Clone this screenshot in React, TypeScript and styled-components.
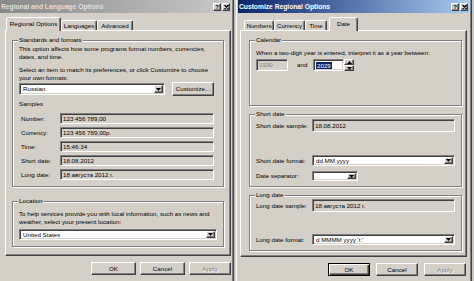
import React from 'react';
import styled, { createGlobalStyle, css } from 'styled-components';

/// Classic palette
const FACE = '#d4d0c8';
const LIGHT = '#ffffff';
const SHADOW = '#808080';
const DARK = '#404040';

const raised = css`
  border: 1px solid;
  border-color: ${ LIGHT } ${ DARK } ${ DARK } ${ LIGHT };
  box-shadow: inset -1px -1px ${ SHADOW };
`;

const sunken = css`
  border: 1px solid;
  border-color: ${ SHADOW } ${ LIGHT } ${ LIGHT } ${ SHADOW };
  box-shadow: inset 1px 1px ${ DARK }, inset -1px -1px ${ FACE };
`;

const GlobalStyle = createGlobalStyle`
  html, body {
    margin: 0;
    padding: 0;
    overflow: hidden;
    background: #cac8c3;
  }

  body {
    font-family: "Liberation Sans", Arial, sans-serif;
    font-size: 6.2px;
    line-height: 8px;
    color: #000;
  }

  * {
    box-sizing: border-box;
  }
`;

/// Window frame
const Desktop = styled.div`
  display: flex;
  align-items: flex-start;
  width: 474px;
  height: 281px;
  overflow: hidden;
`;

const Window = styled.div<{ $width: number; $offset: number }>`
  flex: none;
  display: flex;
  flex-direction: column;
  width: ${ p => p.$width }px;
  height: 292px;
  margin: -3px 0 0 ${ p => p.$offset }px;
  padding: 2px;
  background: ${ FACE };
  border: 1px solid;
  border-color: ${ FACE } ${ DARK } ${ DARK } ${ FACE };
  box-shadow: inset 1px 1px ${ LIGHT }, inset -1px -1px ${ SHADOW };
`;

const TitleBar = styled.div<{ $active?: boolean }>`
  display: flex;
  align-items: center;
  height: 13px;
  padding: 0 1px 0 1px;
  background: ${ p => p.$active
          ? 'linear-gradient(to right, #0a246a, #a6caf0)'
          : 'linear-gradient(to right, #8a8a8a, #c8c8c8)' };
  color: ${ p => p.$active ? '#ffffff' : '#e2dfda' };
`;

const TitleText = styled.span`
  flex: 1;
  font-weight: bold;
  font-size: 6.7px;
  white-space: nowrap;
  overflow: hidden;
`;

const CaptionButton = styled.div`
  ${ raised };
  width: 8px;
  height: 8px;
  margin-left: 1px;
  display: flex;
  align-items: center;
  justify-content: center;
  background: ${ FACE };
  color: #000;
  font-weight: bold;
  font-size: 6px;
  line-height: 1;
`;

const WindowBody = styled.div<{ $pad: string }>`
  display: flex;
  flex-direction: column;
  padding: ${ p => p.$pad };
`;

/// Tabs
const TabStrip = styled.div<{ $indent: number }>`
  position: relative;
  z-index: 1;
  display: flex;
  align-items: flex-end;
  height: 13px;
  padding-left: ${ p => p.$indent }px;
`;

const Tab = styled.div<{ $width: number; $selected?: boolean; $gap?: number }>`
  width: ${ p => p.$width }px;
  height: ${ p => p.$selected ? 14 : 10 }px;
  margin-bottom: ${ p => p.$selected ? -1 : 0 }px;
  margin-left: ${ p => p.$gap || 0 }px;
  padding-top: ${ p => p.$selected ? 2 : 1 }px;
  border: 1px solid;
  border-bottom: none;
  border-color: ${ LIGHT } ${ DARK } transparent ${ LIGHT };
  border-radius: 2px 2px 0 0;
  box-shadow: inset -1px 0 ${ SHADOW };
  background: ${ FACE };
  text-align: center;
  white-space: nowrap;
`;

const Panel = styled.div<{ $height: number; $pad: string }>`
  display: flex;
  flex-direction: column;
  height: ${ p => p.$height }px;
  padding: ${ p => p.$pad };
  border: 1px solid;
  border-color: ${ LIGHT } ${ DARK } ${ DARK } ${ LIGHT };
  box-shadow: inset -1px -1px ${ SHADOW };
`;

/// Group boxes
const Group = styled.div<{ $height: number; $pad: string; $mt?: number }>`
  position: relative;
  flex: none;
  height: ${ p => p.$height }px;
  margin-top: ${ p => p.$mt || 0 }px;
  padding: ${ p => p.$pad };
  border: 1px solid ${ SHADOW };
  box-shadow: 1px 1px ${ LIGHT }, inset 1px 1px ${ LIGHT };
`;

const GroupLabel = styled.span`
  position: absolute;
  top: -5px;
  left: 5px;
  padding: 0 1px;
  background: ${ FACE };
  white-space: nowrap;
`;

const Text = styled.div<{ $mt?: number }>`
  margin-top: ${ p => p.$mt || 0 }px;
  white-space: nowrap;
`;

/// Inputs
const Combo = styled.div<{ $width: number; $height: number; $mt?: number }>`
  ${ sunken };
  display: flex;
  align-items: stretch;
  width: ${ p => p.$width }px;
  height: ${ p => p.$height }px;
  margin-top: ${ p => p.$mt || 0 }px;
  padding: 1px;
  background: #fff;
`;

const ComboValue = styled.span`
  flex: 1;
  display: flex;
  align-items: center;
  padding-left: 2px;
  white-space: nowrap;
  overflow: hidden;
`;

const DropButton = styled.div`
  ${ raised };
  flex: none;
  width: 9px;
  display: flex;
  align-items: center;
  justify-content: center;
  background: ${ FACE };
`;

const Arrow = ({ up }: { up?: boolean }) => (
  <svg width="5" height="3" viewBox="0 0 5 3">
    <polygon points={ up ? '0,3 5,3 2.5,0' : '0,0 5,0 2.5,3' } fill="#000"/>
  </svg>
);

const ReadField = styled.div<{ $width: number; $height: number; $disabled?: boolean; $white?: boolean }>`
  ${ sunken };
  flex: none;
  display: flex;
  align-items: center;
  width: ${ p => p.$width }px;
  height: ${ p => p.$height }px;
  padding-left: 2px;
  background: ${ p => p.$white ? '#fff' : FACE };
  color: ${ p => p.$disabled ? SHADOW : '#000' };
  white-space: nowrap;
`;

const Selected = styled.span`
  background: #0a246a;
  color: #fff;
  padding: 0 1px;
  line-height: 7px;
`;

const Spinner = styled.div`
  display: flex;
  flex-direction: column;
  width: 10px;
  height: 12px;
`;

const SpinButton = styled.div`
  ${ raised };
  flex: 1;
  display: flex;
  align-items: center;
  justify-content: center;
  background: ${ FACE };
`;

/// Rows
const Row = styled.div<{ $mt?: number; $gap?: number }>`
  display: flex;
  align-items: center;
  margin-top: ${ p => p.$mt || 0 }px;
  gap: ${ p => p.$gap || 0 }px;
`;

const RowLabel = styled.span<{ $width: number; $indent?: number }>`
  flex: none;
  width: ${ p => p.$width }px;
  padding-left: ${ p => p.$indent || 0 }px;
  white-space: nowrap;
`;

const AndLabel = styled.span`
  width: 25px;
  padding-left: 9px;
`;

const SampleList = styled.div`
  display: flex;
  flex-direction: column;
  gap: 3px;
  margin-top: 5px;
`;

/// Buttons
const ButtonRow = styled.div<{ $gap: number; $pad?: number }>`
  display: flex;
  justify-content: flex-end;
  gap: ${ p => p.$gap }px;
  margin-top: 6px;
  padding-right: ${ p => p.$pad || 0 }px;
`;

const PushButton = styled.div<{ $width: number; $height?: number; $default?: boolean; $disabled?: boolean }>`
  flex: none;
  display: flex;
  align-items: center;
  justify-content: center;
  width: ${ p => p.$width }px;
  height: ${ p => p.$height || 13 }px;
  background: ${ FACE };
  ${ p => p.$default ? css`
    border: 1px solid #000;
    box-shadow: inset 1px 1px ${ LIGHT }, inset -1px -1px ${ DARK }, inset -2px -2px ${ SHADOW };
  ` : raised };
  color: ${ p => p.$disabled ? SHADOW : '#000' };
  text-shadow: ${ p => p.$disabled ? `1px 1px ${ LIGHT }` : 'none' };
`;

/// Shared pieces
const Caption = ({ title, active }: { title: string; active?: boolean }) => (
  <TitleBar $active={ active }>
    <TitleText>{ title }</TitleText>
    <CaptionButton>?</CaptionButton>
    <CaptionButton>
      <svg width="5" height="4" viewBox="0 0 5 4">
        <path d="M0.5 0 L4.5 4 M4.5 0 L0.5 4" stroke="#000" strokeWidth="1.2"/>
      </svg>
    </CaptionButton>
  </TitleBar>
);

const DropDown = ({ value, width, height, mt }: { value: string; width: number; height: number; mt?: number }) => (
  <Combo $width={ width } $height={ height } $mt={ mt }>
    <ComboValue>{ value }</ComboValue>
    <DropButton><Arrow/></DropButton>
  </Combo>
);

const SAMPLES: [string, string][] = [
  ['Number:', '123 456 789,00'],
  ['Currency:', '123 456 789,00р.'],
  ['Time:', '15:46:34'],
  ['Short date:', '18.08.2012'],
  ['Long date:', '18 августа 2012 г.'],
];

/// Left: Regional and Language Options
const RegionalOptions = () => (
  <Window $width={ 237 } $offset={ -3 }>
    <Caption title="Regional and Language Options"/>
    <WindowBody $pad="4px 0 0 5px">
      <TabStrip $indent={ 1 }>
        <Tab $width={ 55 } $selected>Regional Options</Tab>
        <Tab $width={ 36 }>Languages</Tab>
        <Tab $width={ 36 }>Advanced</Tab>
      </TabStrip>
      <Panel $height={ 226 } $pad="9px 6px 0 6px">
        <Group $height={ 147 } $pad="4px 9px 0 6px">
          <GroupLabel>Standards and formats</GroupLabel>
          <Text>This option affects how some programs format numbers, currencies,<br/>dates, and time.</Text>
          <Text $mt={ 5 }>Select an item to match its preferences, or click Customize to choose<br/>your own formats:</Text>
          <Row $gap={ 7 }>
            <DropDown value="Russian" width={ 146 } height={ 12 }/>
            <PushButton $width={ 42 } $height={ 14 }>Customize...</PushButton>
          </Row>
          <Text $mt={ 4 }>Samples</Text>
          <SampleList>
            { SAMPLES.map(([label, value]) => (
              <Row key={ label }>
                <RowLabel $width={ 41 } $indent={ 2 }>{ label }</RowLabel>
                <ReadField $width={ 154 } $height={ 11 }>{ value }</ReadField>
              </Row>
            )) }
          </SampleList>
        </Group>
        <Group $height={ 46 } $pad="8px 6px 0 6px" $mt={ 14 }>
          <GroupLabel>Location</GroupLabel>
          <Text>To help services provide you with local information, such as news and<br/>weather, select your present location:</Text>
          <DropDown value="United States" width={ 198 } height={ 11 } mt={ 3 }/>
        </Group>
      </Panel>
      <ButtonRow $gap={ 4 }>
        <PushButton $width={ 45 }>OK</PushButton>
        <PushButton $width={ 45 }>Cancel</PushButton>
        <PushButton $width={ 42 } $disabled>Apply</PushButton>
      </ButtonRow>
    </WindowBody>
  </Window>
);

/// Right: Customize Regional Options
const CustomizeOptions = () => (
  <Window $width={ 237 } $offset={ 1 }>
    <Caption title="Customize Regional Options" active/>
    <WindowBody $pad="4px 2px 0 2px">
      <TabStrip $indent={ 4 }>
        <Tab $width={ 30 }>Numbers</Tab>
        <Tab $width={ 31 }>Currency</Tab>
        <Tab $width={ 22 }>Time</Tab>
        <Tab $width={ 29 } $gap={ 2 } $selected>Date</Tab>
      </TabStrip>
      <Panel $height={ 227 } $pad="9px 4px 0 8px">
        <Group $height={ 66 } $pad="8px 6px 0 6px">
          <GroupLabel>Calendar</GroupLabel>
          <Text>When a two-digit year is entered, interpret it as a year between:</Text>
          <Row $mt={ 2 }>
            <ReadField $width={ 32 } $height={ 12 } $disabled>1930</ReadField>
            <AndLabel>and</AndLabel>
            <ReadField $width={ 31 } $height={ 12 } $white><Selected>2029</Selected></ReadField>
            <Spinner>
              <SpinButton><Arrow up/></SpinButton>
              <SpinButton><Arrow/></SpinButton>
            </Spinner>
          </Row>
        </Group>
        <Group $height={ 73 } $pad="4px 6px 0 6px" $mt={ 8 }>
          <GroupLabel>Short date</GroupLabel>
          <Row>
            <RowLabel $width={ 56 }>Short date sample:</RowLabel>
            <ReadField $width={ 143 } $height={ 13 }>18.08.2012</ReadField>
          </Row>
          <Row $mt={ 23 }>
            <RowLabel $width={ 56 }>Short date format:</RowLabel>
            <DropDown value="dd.MM.yyyy" width={ 143 } height={ 11 }/>
          </Row>
          <Row $mt={ 5 }>
            <RowLabel $width={ 56 }>Date separator:</RowLabel>
            <DropDown value="." width={ 46 } height={ 10 }/>
          </Row>
        </Group>
        <Group $height={ 56 } $pad="3px 6px 0 6px" $mt={ 8 }>
          <GroupLabel>Long date</GroupLabel>
          <Row>
            <RowLabel $width={ 56 }>Long date sample:</RowLabel>
            <ReadField $width={ 143 } $height={ 13 }>18 августа 2012 г.</ReadField>
          </Row>
          <Row $mt={ 22 }>
            <RowLabel $width={ 56 }>Long date format:</RowLabel>
            <DropDown value="d MMMM yyyy 'г.'" width={ 143 } height={ 11 }/>
          </Row>
        </Group>
      </Panel>
      <ButtonRow $gap={ 6 } $pad={ 1 }>
        <PushButton $width={ 42 } $default>OK</PushButton>
        <PushButton $width={ 42 }>Cancel</PushButton>
        <PushButton $width={ 42 } $disabled>Apply</PushButton>
      </ButtonRow>
    </WindowBody>
  </Window>
);

export default function App() {
  return (
    <>
      <GlobalStyle/>
      <Desktop>
        <RegionalOptions/>
        <CustomizeOptions/>
      </Desktop>
    </>
  );
}
